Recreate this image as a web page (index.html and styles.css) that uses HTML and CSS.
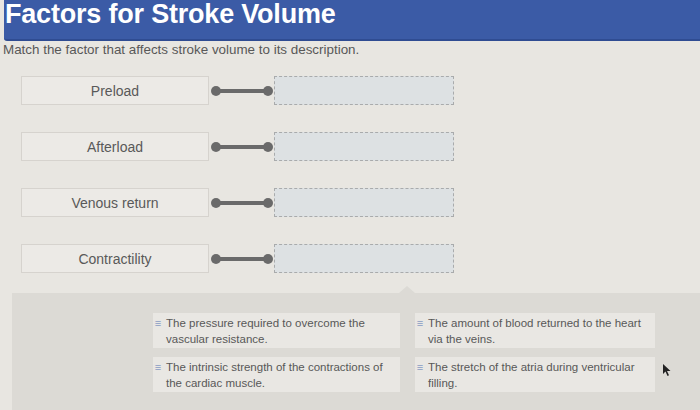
FILE: index.html
```html
<!DOCTYPE html>
<html>
<head>
<meta charset="utf-8">
<link rel="stylesheet" href="styles.css">
</head>
<body>
<div class="page">
  <header class="banner"><h1 class="title">Factors for Stroke Volume</h1></header>
  <p class="instr">Match the factor that affects stroke volume to its description.</p>
  <div class="rows">
    <div class="row">
      <div class="term">Preload</div>
      <div class="link"><span class="dot"></span><span class="bar"></span><span class="dot"></span></div>
      <div class="drop"></div>
    </div>
    <div class="row">
      <div class="term">Afterload</div>
      <div class="link"><span class="dot"></span><span class="bar"></span><span class="dot"></span></div>
      <div class="drop"></div>
    </div>
    <div class="row">
      <div class="term">Venous return</div>
      <div class="link"><span class="dot"></span><span class="bar"></span><span class="dot"></span></div>
      <div class="drop"></div>
    </div>
    <div class="row">
      <div class="term">Contractility</div>
      <div class="link"><span class="dot"></span><span class="bar"></span><span class="dot"></span></div>
      <div class="drop"></div>
    </div>
  </div>
  <div class="bank">
    <span class="notch"></span>
    <div class="cards">
      <div class="card"><span class="grip">≡</span><span class="txt">The pressure required to overcome the vascular resistance.</span></div>
      <div class="card"><span class="grip">≡</span><span class="txt">The amount of blood returned to the heart via the veins.</span></div>
      <div class="card"><span class="grip">≡</span><span class="txt">The intrinsic strength of the contractions of the cardiac muscle.</span></div>
      <div class="card"><span class="grip">≡</span><span class="txt">The stretch of the atria during ventricular filling.</span></div>
    </div>
    <svg class="cursor" width="10" height="14" viewBox="0 0 10 14"><path d="M1 1 L1 11 L3.5 8.5 L5.5 13 L7 12.3 L5 8 L8.5 8 Z" fill="#222"/></svg>
  </div>
</div>
</body>
</html>
```
FILE: styles.css
```css
* { box-sizing: border-box; }
html, body { margin: 0; padding: 0; }
body {
  width: 700px;
  height: 410px;
  overflow: hidden;
  background: #e8e6e1;
  font-family: "Liberation Sans", Arial, sans-serif;
  color: #575757;
}
.page { position: relative; width: 700px; height: 410px; }
.banner {
  height: 41px;
  margin-left: 4px;
  background: #3b5ba6;
  border-bottom: 2px solid #2f4c92;
  border-bottom-left-radius: 3px;
}
.title {
  margin: 0;
  padding: 0 0 0 1px;
  font-size: 27px;
  font-weight: bold;
  line-height: 29px;
  color: #ffffff;
  letter-spacing: -0.2px;
}
.instr {
  margin: 0;
  padding: 0 0 0 3px;
  font-size: 13.4px;
  line-height: 17px;
  color: #585858;
}
.rows {
  display: flex;
  flex-direction: column;
  gap: 27px;
  padding: 18px 0 0 21px;
}
.row {
  display: flex;
  align-items: center;
  height: 29px;
}
.term {
  width: 188px;
  height: 29px;
  display: flex;
  align-items: center;
  justify-content: center;
  background: #eceae6;
  border: 1px solid #d6d3ce;
  font-size: 14px;
  color: #595959;
}
.link {
  width: 64px;
  display: flex;
  align-items: center;
  padding-left: 2px;
}
.dot {
  width: 10px;
  height: 10px;
  border-radius: 50%;
  background: #6a6a6a;
  flex: none;
}
.bar {
  flex: 1;
  height: 4px;
  background: #6a6a6a;
  margin: 0 -2px;
}
.drop {
  width: 180px;
  height: 29px;
  margin-left: 1px;
  background: #dde1e3;
  border: 1px dashed #a9abac;
}
.bank {
  position: absolute;
  left: 12px;
  top: 293px;
  right: 0;
  bottom: 0;
  background: #dcdad5;
}
.notch {
  position: absolute;
  left: 387px;
  top: -7px;
  width: 0;
  height: 0;
  border-left: 8px solid transparent;
  border-right: 8px solid transparent;
  border-bottom: 7px solid #dcdad5;
}
.cards {
  display: grid;
  grid-template-columns: 247px 240px;
  column-gap: 15px;
  row-gap: 9px;
  padding: 20px 0 0 141px;
}
.card {
  display: flex;
  align-items: flex-start;
  gap: 3px;
  height: 35px;
  padding: 2px 4px 0 0;
  background: #e9e7e3;
  font-size: 11.5px;
  line-height: 16px;
  color: #585858;
}
.grip {
  color: #8a9cc4;
  font-size: 11px;
  width: 10px;
  flex: none;
  text-align: center;
}
.cursor {
  position: absolute;
  left: 650px;
  top: 70px;
}
```
